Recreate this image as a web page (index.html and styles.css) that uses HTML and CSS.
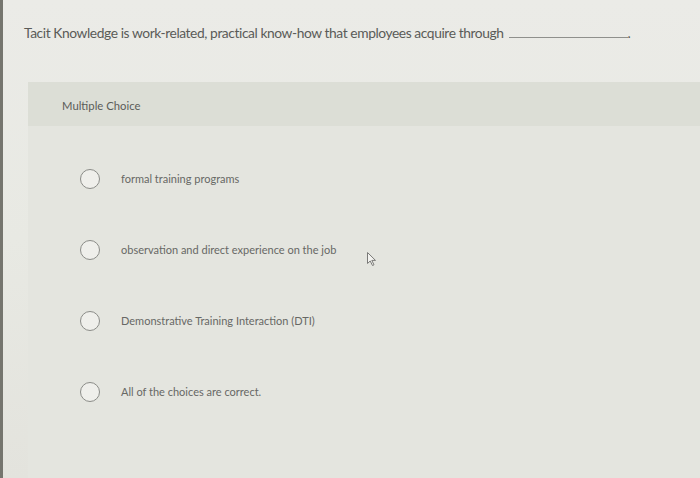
FILE: index.html
```html
<!DOCTYPE html>
<html>
<head>
<meta charset="utf-8">
<link rel="stylesheet" href="styles.css">
</head>
<body>
<div class="screen">
  <p class="prompt">Tacit Knowledge is work-related, practical know-how that employees acquire through <span class="blank"></span>.</p>
  <div class="panel">
    <div class="band">Multiple Choice</div>
    <ul class="options">
      <li class="option"><span class="radio"></span><span class="label">formal training programs</span></li>
      <li class="option"><span class="radio"></span><span class="label">observation and direct experience on the job</span></li>
      <li class="option"><span class="radio"></span><span class="label">Demonstrative Training Interaction (DTI)</span></li>
      <li class="option"><span class="radio"></span><span class="label">All of the choices are correct.</span></li>
    </ul>
  </div>
  <svg class="cursor" width="12" height="16" viewBox="0 0 12 16"><path d="M1.5 1.5 L1.5 12.5 L4.2 10 L6.5 14.5 L8 13.8 L5.8 9.4 L9.5 9.4 Z" fill="#f2f2ef" stroke="#7a7a78" stroke-width="1" stroke-linejoin="round"/></svg>
</div>
</body>
</html>
```
FILE: styles.css
```css
html, body {
  margin: 0;
  padding: 0;
}
body {
  width: 700px;
  height: 478px;
  overflow: hidden;
  background: #e7e8e2;
  font-family: Lato, "Liberation Sans", sans-serif;
  color: #5e5f5c;
}
.screen {
  position: relative;
  height: 478px;
  border-left: 3px solid #75756e;
  background: linear-gradient(180deg, #ebebe7 0%, #e8e9e3 50%, #e3e3dd 100%);
}
.prompt {
  margin: 0;
  padding: 24px 0 0 21px;
  font-size: 13.8px;
  line-height: 18px;
  letter-spacing: -0.42px;
  color: #5a5b58;
}
.blank {
  display: inline-block;
  width: 119px;
  border-bottom: 1px solid #8f908c;
  margin-left: 2px;
  vertical-align: baseline;
}
.panel {
  margin: 40px 0 0 25px;
  height: 400px;
  background: #e4e5df;
}
.band {
  height: 44px;
  padding-left: 34px;
  display: flex;
  align-items: center;
  background: #dcded6;
  font-size: 11.3px;
  color: #5b5c59;
  box-sizing: border-box;
  padding-top: 2px;
}
.options {
  list-style: none;
  margin: 0;
  padding: 42px 0 0 52px;
  display: flex;
  flex-direction: column;
  gap: 50px;
}
.option {
  display: flex;
  align-items: center;
  height: 21px;
}
.radio {
  width: 18px;
  height: 18px;
  border: 1.5px solid #8b8c88;
  border-radius: 50%;
  background: #efefeb;
  flex: none;
}
.label {
  margin-left: 21px;
  font-size: 11px;
  color: #676865;
}
.cursor {
  position: absolute;
  left: 363px;
  top: 251px;
}
```
